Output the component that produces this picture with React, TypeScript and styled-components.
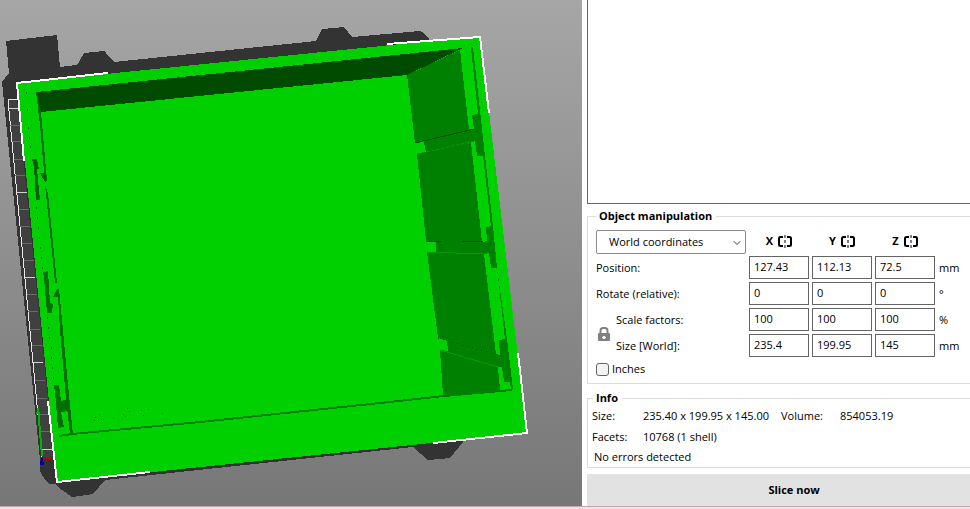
import React from 'react';
import styled, { createGlobalStyle } from 'styled-components';
import { ChevronDown } from 'lucide-react';

const GlobalStyle = createGlobalStyle`
  *, *::before, *::after { box-sizing: border-box; }
  body { margin: 0; background: #fff; }
  body, button, input, select {
    font-family: "Open Sans", "Noto Sans", sans-serif;
    font-size: 11px;
    line-height: 16px;
    color: #000;
  }
`;

const Page = styled.div`
  display: flex;
  flex-direction: column;
  min-height: 100vh;
`;

const Workspace = styled.main`
  display: flex;
  flex: 1;
`;

const Viewport = styled.section`
  display: flex;
  flex: 1;
  min-width: 0;
  background: linear-gradient(#a6a6a6, #777);
`;

const Scene = styled.svg`
  flex: 1;
  width: 100%;
  min-width: 0;
`;

const Sidebar = styled.aside`
  display: flex;
  flex-direction: column;
  width: 388px;
  padding-left: 5px;
  background: #fff;
`;

const ObjectList = styled.div`
  flex: 1;
  border-left: 1px solid #646464;
  border-bottom: 1px solid #646464;
`;

const Group = styled.fieldset<{ $legendInset: number }>`
  min-width: 0;
  margin: ${(p) => (p.$legendInset > 6 ? 4 : 6)}px 0 0;
  padding: 0;
  border: 1px solid #dcdcdc;
  border-right: 0;

  legend {
    margin-left: ${(p) => p.$legendInset}px;
    padding: 0 4px 0 3px;
    font-weight: 700;
  }
`;

const Manipulation = styled.div`
  display: grid;
  grid-template-columns: 20px 127px repeat(3, 60px) auto;
  grid-template-rows: repeat(5, 26px);
  column-gap: 3px;
  align-items: start;
  padding: 6px 0 0 8px;
`;

const SelectBox = styled.div`
  position: relative;
  grid-column: 1 / 3;
  width: 150px;

  svg {
    position: absolute;
    right: 3px;
    top: 7px;
    pointer-events: none;
  }
`;

const Select = styled.select`
  display: block;
  width: 100%;
  height: 24px;
  padding: 0 12px;
  appearance: none;
  background: #fff;
  border: 1px solid #8a8a8a;
  border-radius: 2px;
`;

const AxisHead = styled.div`
  display: flex;
  align-items: center;
  justify-content: center;
  gap: 5px;
  height: 22px;
  font-weight: 700;
`;

const IconButton = styled.button`
  display: flex;
  padding: 0;
  border: 0;
  background: none;
`;

const LockButton = styled(IconButton)`
  grid-column: 1;
  grid-row: 4 / 6;
  align-self: center;
  padding-left: 2px;
`;

const RowLabel = styled.label<{ $nested?: boolean }>`
  grid-column: ${(p) => (p.$nested ? '2' : '1 / 3')};
  margin-left: ${(p) => (p.$nested ? -3 : 0)}px;
  line-height: 24px;
`;

const ValueInput = styled.input`
  width: 60px;
  height: 23px;
  padding: 0 4px 3px;
  border: 1px solid #646464;
  background: #fff;
`;

const Unit = styled.span`
  padding-left: 1px;
  line-height: 23px;
`;

const CheckRow = styled.label`
  display: flex;
  align-items: center;
  gap: 3px;
  height: 23px;
  padding: 0 0 5px 8px;
`;

const Checkbox = styled.input`
  width: 13px;
  height: 13px;
  margin: 0;
  appearance: none;
  border: 1px solid #646464;
  border-radius: 3px;
  background: #f3f3f3;
`;

const InfoBody = styled.div`
  display: grid;
  grid-template-columns: 51px 138px 59px auto;
  grid-template-rows: 21px 20px 18px;
  padding: 2px 0 0 4px;
`;

const InfoNote = styled.span`
  grid-column: 1 / -1;
  padding-left: 2px;
`;

const SliceButton = styled.button`
  height: 32px;
  margin-top: 6px;
  padding: 0;
  padding-left: 31px;
  border: 0;
  background: #e2e2e2;
  font-weight: 700;
`;

const StatusStrip = styled.footer`
  height: 3px;
  border-top: 1px solid #c3aab2;
  background: #f7dfe6;
`;

const gridLines = [108, 125, 141, 159, 175, 192, 209, 226, 243, 260, 277, 294, 311, 329, 345, 362, 380, 398, 414, 431, 449];
const brightLines = [108, 192, 277, 362, 449];

const rimDots = [
  [26, 92], [27, 109], [28, 127], [29, 137], [30, 146], [36, 207], [37, 217], [38, 227],
  [39, 237], [40, 247], [41, 257], [42, 267], [47, 317], [48, 327], [49, 337], [51, 347],
  [51, 357], [52, 367], [53, 377],
];

const floorDots = [
  [94, 420], [95, 417], [99, 414], [98, 419], [101, 419], [103, 419], [113, 418], [123, 414],
  [125, 416], [127, 408], [129, 411], [141, 410], [143, 415], [148, 409], [162, 413],
];

function ModelScene() {
  return (
    <Scene viewBox="0 0 582 506" preserveAspectRatio="xMidYMid slice" shapeRendering="crispEdges" role="img" aria-label="Box on print bed">
      <path
        fill="#333"
        d="M6 41 57 35 60 67 76 65 79 62 84 53 104 51 106 53 112 60 114 62 316 41 322 29 344 27 352 37 420 31 422 32 429 39 440 60 463 442 450 458 428 460 413 447 105 480 93 494 72 497 58 487 55 484 49 484 45 480 40 471 40 460 2 82 9 73Z"
      />
      <path fill="#404040" d="M8 100 17 99 54 457 43 458Z" />
      <path fill="none" stroke="#e8e8e8" d="M8 100 42 457M8 100 17 99" />
      {gridLines.map((y) => (
        <path
          key={y}
          fill="none"
          stroke={brightLines.includes(y) ? '#d0d0d0' : '#6a6a6a'}
          d={`M${8 + Math.round((y - 100) * 0.097)} ${y + 0.5}h10`}
        />
      ))}
      <path fill="none" stroke="#00b400" strokeWidth="2" d="M38 408 42 456M36 413h4" />
      <path fill="#c80000" d="M43 457h8v2h-8z" />
      <path fill="#0000a8" d="M41 458h2l1 7h-4z" />

      <path fill="#00d000" d="M17 83 480 36 527 433 57 482Z" />
      <path fill="none" stroke="#fff" strokeWidth="2" d="M24 161 17 83 108 73M387 44 480 37 489 113M518 353 527 433 433 443M48 401 57 482 150 472" />

      <path fill="#004b00" d="M36 92 463 48 407 75 41 112Z" />
      <path fill="#007000" d="M36 92 41 112 47 181 44 172 40 125Z" />
      <path fill="#007000" d="M45 185 48 193 51 223 57 283 55 283 49 223Z" />
      <path fill="#007000" d="M57 289 59 289 63 330 68 385 73 435 70 435 65 388 60 330 58 297 53 297Z" />
      <path fill="#006300" d="M32 159h5l2 10h-2l3 31h-4l-2-33zM40 173h4l3 8-2 1z" />
      <path fill="#007000" d="M43 272 48 271 50 303 53 304 52 313 47 313 44 278Z" />
      <path fill="#007000" d="M54 385h5l2 16 6-2 1 12-7 1 3 15-6 1-3-36z" />
      <path fill="none" stroke="#008000" strokeWidth="2" d="M59 436 72 434 200 422 380 403 444 396 512 390" />

      <path fill="#008000" d="M407 75 460 50 469 129 474 129 472 115 477 114 471 47 473 47 485 156 493 226 497 268 507 339 513 389 443 396 440 350 448 351 447 341 438 338 427 252 436 252 436 241 426 241 417 154 426 152 424 142 415 143Z" />
      <path fill="#00d000" d="M460 49 471 48 478 114 472 115 474 129 469 129Z" />
      <path fill="#00d000" d="M471 142 475 141 477 156 483 156 491 226 486 227 487 241 482 242Z" />
      <path fill="#00d000" d="M484 254 489 253 491 268 497 268 505 339 499 340 500 355 496 354Z" />
      <path fill="#00d000" d="M498 367 502 367 504 382 510 382 511 389 500 390Z" />
      <path fill="none" stroke="#004b00" d="M415 143 474 129M426 241h15M462 241h21" />
      <path fill="none" stroke="#004b00" strokeDasharray="1 4" d="M438 338 497 355" />
      <path fill="none" stroke="#009c00" strokeDasharray="3 2" d="M417 154 475 141" />
      <path fill="none" stroke="#009c00" d="M428 252 484 254M440 350 498 367" />

      {rimDots.map(([x, y]) => (
        <rect key={`r${x}-${y}`} x={x} y={y} width="1" height="2" fill="#007000" />
      ))}
      {floorDots.map(([x, y]) => (
        <rect key={`f${x}-${y}`} x={x} y={y} width="1" height="1" fill="#008000" />
      ))}
    </Scene>
  );
}

function MirrorIcon() {
  return (
    <svg width="14" height="13" viewBox="0 0 14 13" fill="none" aria-hidden="true">
      <path d="M6 2H2.500Q1 2 1 3.500V9.500Q1 11 2.500 11H6M8 2h3.500Q13 2 13 3.500V9.500Q13 11 11.500 11H8" stroke="#000" strokeWidth="2" />
      <path d="M7 0v3M7 5v3M7 10v3" stroke="#fff" strokeWidth="4" />
      <path d="M7 0v3M7 5v3M7 10v3" stroke="#808080" strokeWidth="2" />
    </svg>
  );
}

function LockIcon() {
  return (
    <svg width="12" height="14" viewBox="0 0 12 14" fill="none" aria-hidden="true">
      <path d="M2.500 7V3.500Q2.500 1 5 1H7Q9.500 1 9.500 3.500V7" stroke="#808080" strokeWidth="2" />
      <rect y="6" width="12" height="8" rx="1" fill="#808080" />
      <path d="M4 10.500h4M6 9v3" stroke="#fff" strokeWidth="1.500" />
    </svg>
  );
}

const rows = [
  { id: 'position', label: 'Position:', values: ['127.43', '112.13', '72.5'], unit: 'mm' },
  { id: 'rotate', label: 'Rotate (relative):', values: ['0', '0', '0'], unit: '°' },
  { id: 'scale', label: 'Scale factors:', values: ['100', '100', '100'], unit: '%', nested: true },
  { id: 'size', label: 'Size [World]:', values: ['235.4', '199.95', '145'], unit: 'mm', nested: true },
];
const axes = ['X', 'Y', 'Z'];

export default function App() {
  return (
    <>
      <GlobalStyle />
      <Page>
        <Workspace>
          <Viewport>
            <ModelScene />
          </Viewport>
          <Sidebar>
            <ObjectList />
            <Group $legendInset={8}>
              <legend>Object manipulation</legend>
              <Manipulation>
                <SelectBox>
                  <Select aria-label="Coordinate system">
                    <option>World coordinates</option>
                  </Select>
                  <ChevronDown size={12} strokeWidth={2} color="#444" />
                </SelectBox>
                {axes.map((axis) => (
                  <AxisHead key={axis}>
                    {axis}
                    <IconButton type="button" aria-label={`Mirror ${axis}`}>
                      <MirrorIcon />
                    </IconButton>
                  </AxisHead>
                ))}
                <span />
                {rows.map((row) => (
                  <React.Fragment key={row.id}>
                    <RowLabel htmlFor={`${row.id}-X`} $nested={row.nested}>{row.label}</RowLabel>
                    {row.values.map((value, i) => (
                      <ValueInput
                        key={axes[i]}
                        id={`${row.id}-${axes[i]}`}
                        aria-label={`${row.label} ${axes[i]}`}
                        defaultValue={value}
                      />
                    ))}
                    <Unit>{row.unit}</Unit>
                  </React.Fragment>
                ))}
                <LockButton type="button" aria-label="Lock proportions">
                  <LockIcon />
                </LockButton>
              </Manipulation>
              <CheckRow>
                <Checkbox type="checkbox" />
                Inches
              </CheckRow>
            </Group>
            <Group $legendInset={5}>
              <legend>Info</legend>
              <InfoBody>
                <span>Size:</span>
                <span>235.40 x 199.95 x 145.00</span>
                <span>Volume:</span>
                <span>854053.19</span>
                <span>Facets:</span>
                <span>10768 (1 shell)</span>
                <InfoNote>No errors detected</InfoNote>
              </InfoBody>
            </Group>
            <SliceButton type="button">Slice now</SliceButton>
          </Sidebar>
        </Workspace>
        <StatusStrip />
      </Page>
    </>
  );
}
